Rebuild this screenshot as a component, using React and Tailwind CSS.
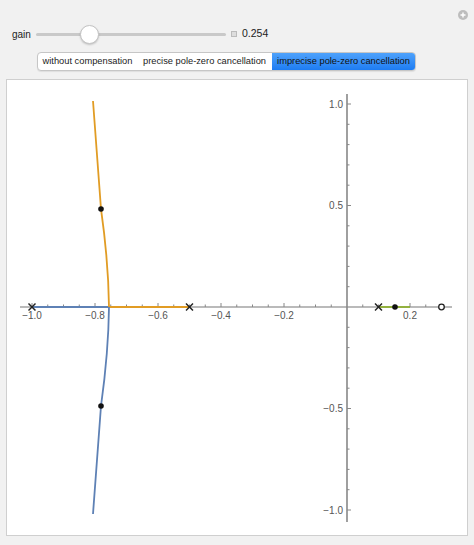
import React from "react";

const X = (x) => 347 + 315 * x;
const Y = (y) => 307 - 203 * y;

function Plot() {
  const xticks = [];
  for (let i = -20; i <= 6; i++) {
    const v = i * 0.05;
    const major = i % 4 === 0;
    if (i === 0) continue;
    xticks.push(
      <line key={"xt" + i} x1={X(v)} x2={X(v)} y1={307} y2={307 - (major ? 4 : 2.5)} stroke="#888" strokeWidth="1" />
    );
  }
  const yticks = [];
  for (let i = -10; i <= 10; i++) {
    if (i === 0) continue;
    const v = i * 0.1;
    const major = i % 5 === 0;
    yticks.push(
      <line key={"yt" + i} x1={347} x2={347 + (major ? 4 : 2.5)} y1={Y(v)} y2={Y(v)} stroke="#888" strokeWidth="1" />
    );
  }
  const xlabels = [
    [-1.0, "−1.0"],
    [-0.8, "−0.8"],
    [-0.6, "−0.6"],
    [-0.4, "−0.4"],
    [-0.2, "−0.2"],
    [0.2, "0.2"],
  ];
  const ylabels = [
    [1.0, "1.0"],
    [0.5, "0.5"],
    [-0.5, "−0.5"],
    [-1.0, "−1.0"],
  ];
  const cross = (cx, key) => (
    <g key={key} stroke="#222" strokeWidth="1.5">
      <line x1={cx - 3.5} y1={303.5} x2={cx + 3.5} y2={310.5} />
      <line x1={cx - 3.5} y1={310.5} x2={cx + 3.5} y2={303.5} />
    </g>
  );
  return (
    <svg width="460" height="455" viewBox="7 80 460 455" className="block">
      <line x1="20" x2="452" y1="307" y2="307" stroke="#777" strokeWidth="1.2" />
      <line x1="347" x2="347" y1="94" y2="522" stroke="#888" strokeWidth="1.6" />
      {xticks}
      {yticks}
      {xlabels.map(([v, t]) => (
        <text key={t} x={X(v)} y="319" fontSize="10" fill="#555" textAnchor="middle" fontFamily="Liberation Sans, Arial, sans-serif">
          {t}
        </text>
      ))}
      {ylabels.map(([v, t]) => (
        <text key={t} x="343" y={Y(v) + 3.5} fontSize="10" fill="#555" textAnchor="end" fontFamily="Liberation Sans, Arial, sans-serif">
          {t}
        </text>
      ))}
      <line x1="32" x2="109" y1="307" y2="307" stroke="#5E81B5" strokeWidth="1.8" />
      <line x1="109" x2="189.5" y1="307" y2="307" stroke="#E19C24" strokeWidth="1.8" />
      <path d="M109 307 Q108.5 262 101 209 Q97 155 93 101" fill="none" stroke="#E19C24" strokeWidth="1.8" />
      <path d="M109 307 Q108.5 352 101 406 Q97 460 93 514" fill="none" stroke="#5E81B5" strokeWidth="1.8" />
      <line x1="378.5" x2="410" y1="307" y2="307" stroke="#8FB032" strokeWidth="1.8" />
      {cross(X(-1.0), "c1")}
      {cross(X(-0.5), "c2")}
      {cross(X(0.1), "c3")}
      <circle cx="101" cy="209" r="2.8" fill="#111" />
      <circle cx="101" cy="406" r="2.8" fill="#111" />
      <circle cx="395" cy="307" r="2.8" fill="#111" />
      <circle cx={X(0.3)} cy="307" r="2.8" fill="white" stroke="#222" strokeWidth="1.3" />
    </svg>
  );
}

export default function App() {
  return (
    <div
      className="relative w-[474px] h-[545px] bg-[#f1f1f1] text-[10px] text-[#222]"
      style={{ fontFamily: '"Liberation Sans", Arial, sans-serif' }}
    >
      <div className="absolute left-[458px] top-[10px] w-[10px] h-[10px] rounded-full bg-[#bdbdbd] flex items-center justify-center">
        <svg width="6" height="6" viewBox="0 0 6 6">
          <path d="M3 0.5V5.5M0.5 3H5.5" stroke="white" strokeWidth="1.4" />
        </svg>
      </div>
      <div className="flex flex-col pt-[25px]">
        <div className="flex items-center h-[18px] pl-[12px]">
          <span className="w-[24px]">gain</span>
          <div className="relative w-[190px] h-[3px] rounded-full bg-[#c9c9c9]">
            <div className="absolute left-[44px] top-[-8px] w-[19px] h-[19px] rounded-full bg-white border border-[#c4c4c4] shadow-[0_1px_2px_rgba(0,0,0,0.2)]" />
          </div>
          <div className="ml-[5px] w-[6px] h-[6px] border border-[#bbb] bg-[#ddd]" />
          <span className="ml-[5px] text-[10.5px]">0.254</span>
        </div>
        <div className="mt-[9px] ml-[37px] flex h-[19px] w-[379px] rounded-[4px] border border-[#c6c6c6] bg-white overflow-hidden shadow-[0_1px_1px_rgba(0,0,0,0.08)] text-[9.3px]">
          <div className="w-[99px] flex items-center justify-center">without compensation</div>
          <div className="w-[135px] flex items-center justify-center">precise pole-zero cancellation</div>
          <div className="flex-1 flex items-center justify-center bg-gradient-to-b from-[#4ea2fb] to-[#1d7cf2] text-[#111]">
            imprecise pole-zero cancellation
          </div>
        </div>
        <div className="mt-[8px] ml-[6px] w-[462px] h-[457px] border border-[#cfcfcf] bg-white">
          <Plot />
        </div>
      </div>
    </div>
  );
}
